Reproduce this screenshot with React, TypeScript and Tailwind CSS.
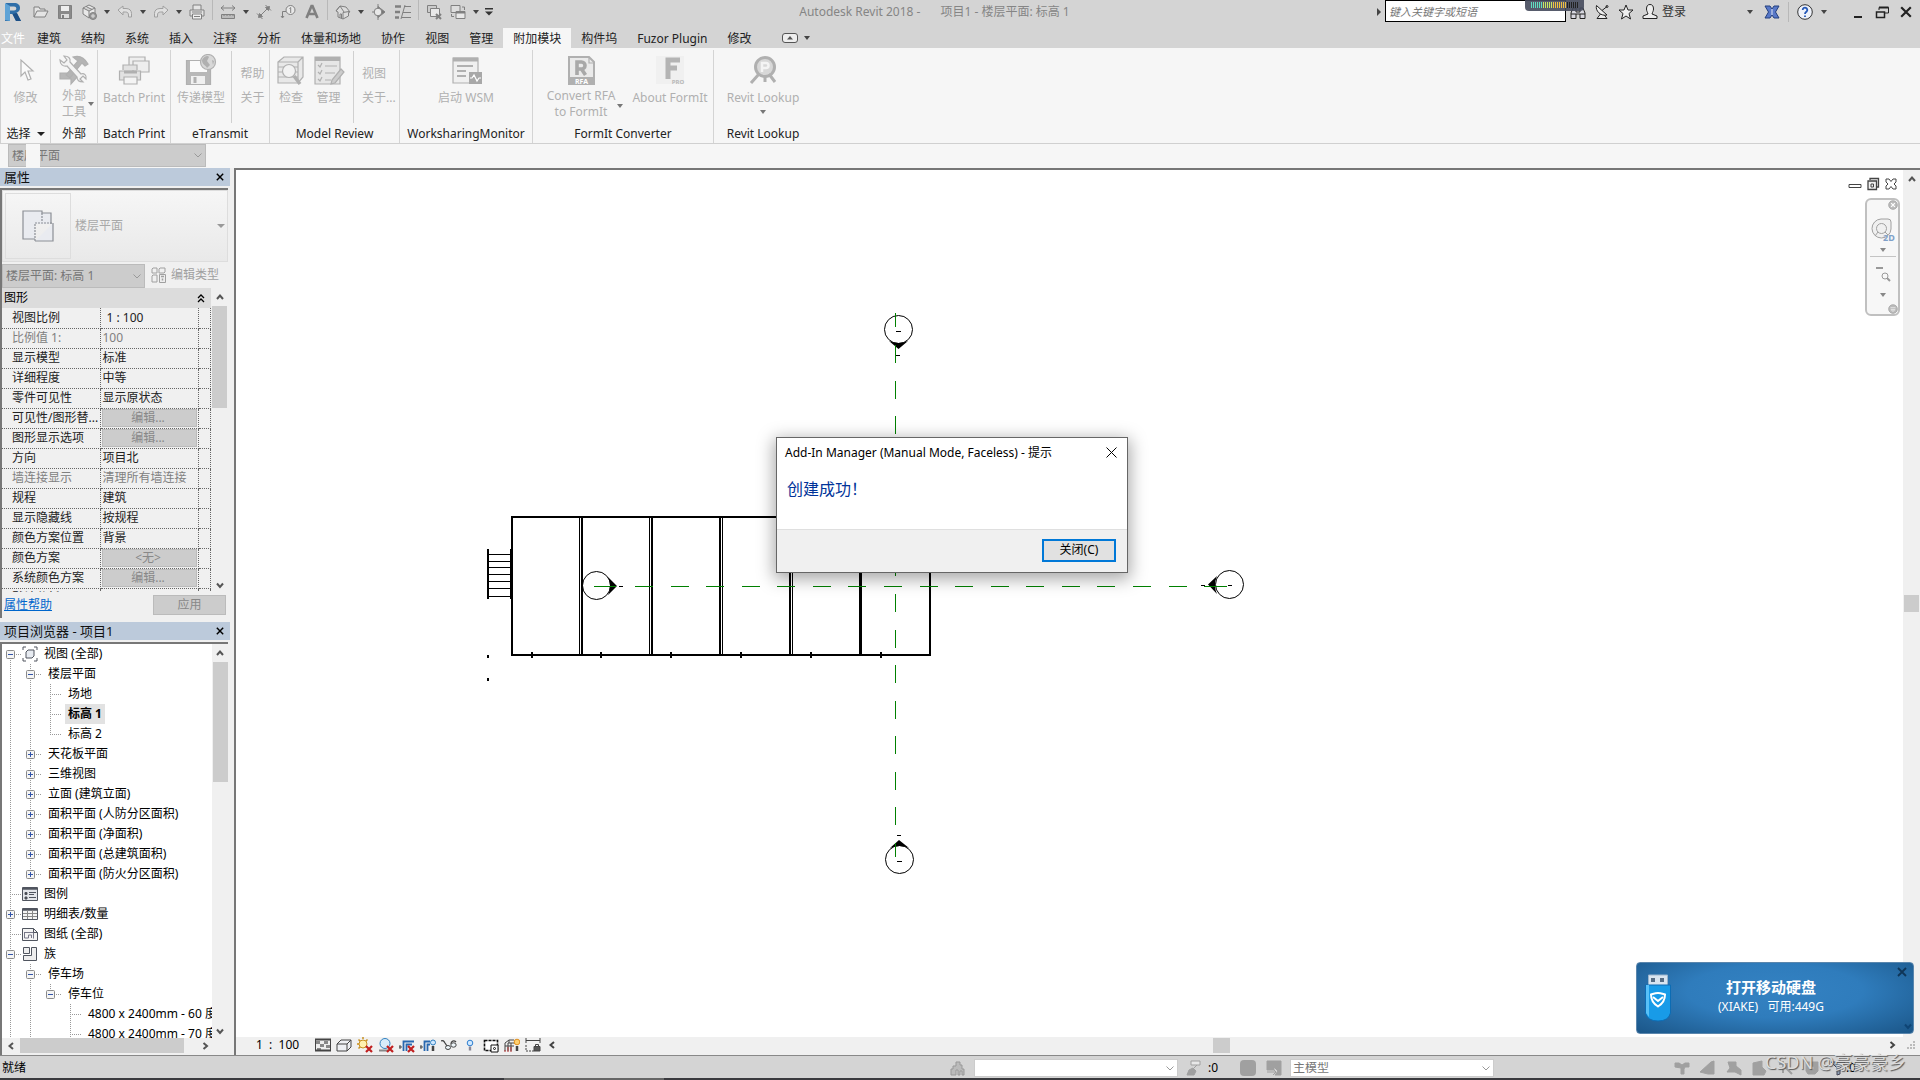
import type { ReactNode } from "react";

const ribbonTabs = [
  "建筑", "结构", "系统", "插入", "注释", "分析", "体量和场地", "协作", "视图", "管理",
  "附加模块", "构件坞", "Fuzor Plugin", "修改",
];

type PropertyRow = { label: string; value: string; kind?: "muted" | "button" | "input" };

const propertyRows: PropertyRow[] = [
  { label: "视图比例", value: "1 : 100", kind: "input" },
  { label: "比例值 1:", value: "100", kind: "muted" },
  { label: "显示模型", value: "标准" },
  { label: "详细程度", value: "中等" },
  { label: "零件可见性", value: "显示原状态" },
  { label: "可见性/图形替...", value: "编辑...", kind: "button" },
  { label: "图形显示选项", value: "编辑...", kind: "button" },
  { label: "方向", value: "项目北" },
  { label: "墙连接显示", value: "清理所有墙连接", kind: "muted" },
  { label: "规程", value: "建筑" },
  { label: "显示隐藏线", value: "按规程" },
  { label: "颜色方案位置", value: "背景" },
  { label: "颜色方案", value: "<无>", kind: "button" },
  { label: "系统颜色方案", value: "编辑...", kind: "button" },
  { label: "默认分析显示...", value: "无" },
];

// Guides, one letter per column: b blank, l line, t tee, e end,
// p plus, q last plus, m minus, r root minus, n last minus
type TreeRow = { guides: string; label: string; icon?: "views" | "legend" | "schedule" | "sheet" | "family"; selected?: boolean };

const treeRows: TreeRow[] = [
  { guides: "r", label: "视图 (全部)", icon: "views" },
  { guides: "lm", label: "楼层平面" },
  { guides: "llt", label: "场地" },
  { guides: "llt", label: "标高 1", selected: true },
  { guides: "lle", label: "标高 2" },
  { guides: "lp", label: "天花板平面" },
  { guides: "lp", label: "三维视图" },
  { guides: "lp", label: "立面 (建筑立面)" },
  { guides: "lp", label: "面积平面 (人防分区面积)" },
  { guides: "lp", label: "面积平面 (净面积)" },
  { guides: "lp", label: "面积平面 (总建筑面积)" },
  { guides: "lq", label: "面积平面 (防火分区面积)" },
  { guides: "t", label: "图例", icon: "legend" },
  { guides: "p", label: "明细表/数量", icon: "schedule" },
  { guides: "t", label: "图纸 (全部)", icon: "sheet" },
  { guides: "m", label: "族", icon: "family" },
  { guides: "lm", label: "停车场" },
  { guides: "lln", label: "停车位" },
  { guides: "llbt", label: "4800 x 2400mm - 60 度" },
  { guides: "llbt", label: "4800 x 2400mm - 70 度" },
];

function Ico({ children, className = "size-4" }: { children: ReactNode; className?: string }) {
  return (
    <svg viewBox="0 0 16 16" className={`shrink-0 ${className}`} fill="none" stroke="currentColor" aria-hidden="true">
      {children}
    </svg>
  );
}

function Caret({ className = "text-[#444]" }: { className?: string }) {
  return (
    <svg viewBox="0 0 6 4" className={`h-1 w-1.5 shrink-0 ${className}`} aria-hidden="true">
      <path d="M0 0h6L3 4z" fill="currentColor" />
    </svg>
  );
}

function Chevron({ dir = "down", className = "" }: { dir?: "up" | "down" | "left" | "right"; className?: string }) {
  const paths = {
    up: "M2 7l3-3.500 3 3.500",
    down: "M2 3.500l3 3.500 3-3.500",
    left: "M7 2l-3.500 3 3.500 3",
    right: "M3.500 2l3.500 3-3.500 3",
  };
  return (
    <svg viewBox="0 0 10 10" className={`size-2.5 shrink-0 ${className}`} fill="none" stroke="currentColor" strokeWidth="2" aria-hidden="true">
      <path d={paths[dir]} />
    </svg>
  );
}

function CloseX({ className = "size-2.5" }: { className?: string }) {
  return (
    <svg viewBox="0 0 10 10" className={`shrink-0 ${className}`} stroke="currentColor" strokeWidth="1.800" aria-hidden="true">
      <path d="M1 1l8 8M9 1l-8 8" />
    </svg>
  );
}

function ToolButton({ label, children }: { label: string; children: ReactNode }) {
  return (
    <button aria-label={label} className="flex h-6 w-6 shrink-0 items-center justify-center text-[#808080]">
      {children}
    </button>
  );
}

function DropButton({ label }: { label: string }) {
  return (
    <button aria-label={label} className="flex h-6 w-3 shrink-0 items-center justify-center">
      <Caret />
    </button>
  );
}

function Separator() {
  return (
    <span className="flex w-[7px] shrink-0 justify-center">
      <span className="h-5 w-px bg-[#b8b8b8]" />
    </span>
  );
}

function TitleBar() {
  return (
    <header className="flex h-7 items-start bg-[#d4d4d4]">
      <button aria-label="应用程序菜单" className="flex h-6 w-[29px] shrink-0 items-center justify-center pr-1">
        <svg viewBox="0 0 18 20" className="h-5 w-[18px]" aria-hidden="true">
          <path d="M2 1h8c4 0 6 2 6 5 0 2.500-1.500 4-3.500 4.800L17 19h-5l-3.500-7H6v7H1z" fill="#2f6ea8" />
          <path d="M1 1l5 3v15l-5-1z" fill="#5fa3d6" />
          <path d="M6 4.500h4c1.500 0 2.300.7 2.300 2S11.500 8.500 10 8.500H6z" fill="#d4d4d4" />
          <path d="M8.500 12l3.500 7h5L13 11z" fill="#1c4f86" />
        </svg>
      </button>
      <ToolButton label="打开">
        <Ico><path d="M1 13V3h5l1 2h5v2M1 13l3-6h11l-3 6z" fill="#e4e4e4" /></Ico>
      </ToolButton>
      <ToolButton label="保存">
        <Ico><path d="M1.500 1.500h13v13h-13z" fill="#8a8a8a" /><path d="M4 2h8v5H4z" fill="#eee" stroke="none" /><path d="M4 10h8v4H4z" fill="#ddd" stroke="none" /><path d="M6 11v3" strokeWidth="2" /></Ico>
      </ToolButton>
      <ToolButton label="同步">
        <Ico><path d="M8 1l6 3v6l-6 4-6-4V4zM2 4l6 3 6-3M8 7v7M5 2.500l6 3" fill="#e8e8e8" /><circle cx="12" cy="12" r="3.500" fill="#999" /><path d="M10 12h4M12 10v4" stroke="#ddd" /></Ico>
      </ToolButton>
      <DropButton label="同步选项" />
      <ToolButton label="放弃">
        <Ico><path d="M1 6l5-4v2.500h3c3.500 0 5.500 2 5.500 5V13h-3v-2c0-2-1-3-3-3H6v3z" fill="#e0e0e0" stroke="#a0a0a0" /></Ico>
      </ToolButton>
      <DropButton label="放弃列表" />
      <ToolButton label="重做">
        <Ico><path d="M15 6l-5-4v2.500H7C3.500 4.500 1.500 6.500 1.500 9.500V13h3v-2c0-2 1-3 3-3H10v3z" fill="#e0e0e0" stroke="#a0a0a0" /></Ico>
      </ToolButton>
      <DropButton label="重做列表" />
      <ToolButton label="打印">
        <Ico><path d="M4 6V1h8v5M1 6h14v6H1z" fill="#e4e4e4" /><path d="M3.500 10h9v5h-9z" fill="#f0f0f0" /><path d="M5 12.500h6M3 8h10" /></Ico>
      </ToolButton>
      <Separator />
      <ToolButton label="测量">
        <Ico><path d="M1 4h14M1 4l3-2.500M1 4l3 2.500M15 4l-3-2.500M15 4l-3 2.500" /><path d="M1.500 10.500h13v4h-13z" fill="#bbb" /><path d="M4 10v2M7 10v2M10 10v2M13 10v2" /></Ico>
      </ToolButton>
      <DropButton label="测量选项" />
      <ToolButton label="对齐标注">
        <Ico><path d="M3 13L13 3M1 9.500l5.500 5.500M9.500 1l5.500 5.500" /><path d="M2.500 13.500l1-4 3 3zM13.500 2.500l-4 1 3 3z" fill="#808080" /></Ico>
      </ToolButton>
      <ToolButton label="按类别标记">
        <Ico><circle cx="10.500" cy="6" r="4.500" fill="#e8e8e8" /><path d="M9.500 4.500l1.200-1V9M6 7.500H2.500v6M1 12l1.500 2L4 12" /></Ico>
      </ToolButton>
      <ToolButton label="文字">
        <Ico><path d="M2.500 14L7.500 2h1L13.500 14M4.500 10h7" strokeWidth="2.600" /></Ico>
      </ToolButton>
      <Separator />
      <ToolButton label="默认三维视图">
        <Ico><path d="M1 7l4-5 6 1 4 5-1.500.500V12L8 15l-5-2V8z" fill="#dcdcdc" /><path d="M1 7l4-5 4 6M8 15V8.500l6-1M5 13.500V10h1.500v4" /></Ico>
      </ToolButton>
      <DropButton label="三维视图选项" />
      <ToolButton label="剖面">
        <Ico><path d="M7 2.500l7 5.500-7 5.500z" fill="#777" /><circle cx="7" cy="8" r="3.800" fill="#e8e8e8" /><path d="M7 0v4M7 12v4M1 8h2" /></Ico>
      </ToolButton>
      <ToolButton label="细线">
        <Ico><path d="M0 2.500h6M0 8h5M0 13.500h4" strokeWidth="2.600" /><path d="M9 2.500h7M8 8.500h8M7 13.500h9M10 1L6 15" /></Ico>
      </ToolButton>
      <Separator />
      <ToolButton label="关闭隐藏窗口">
        <Ico><path d="M1.500 1.500h9v7h-9z" fill="#ccc" /><path d="M4.500 4.500h9v8h-9z" fill="#e8e8e8" /><path d="M10 10l5 5M15 10l-5 5" strokeWidth="2" /></Ico>
      </ToolButton>
      <ToolButton label="切换窗口">
        <Ico><path d="M1 1.500h9v7H1z" fill="#ddd" /><path d="M6 7.500h9v7H6z" fill="#e8e8e8" /><path d="M6 8.500h9" strokeWidth="2" /><path d="M12 3h2.500v3M4 12.500H1.500V10" /></Ico>
      </ToolButton>
      <DropButton label="窗口列表" />
      <button aria-label="自定义快速访问工具栏" className="flex h-6 w-3.5 items-center justify-center">
        <svg viewBox="0 0 8 8" className="size-2" aria-hidden="true"><path d="M0 0h8v1.500H0zM0 3.500h8L4 7.500z" fill="#333" /></svg>
      </button>

      <h1 className="flex flex-1 justify-center gap-5 whitespace-nowrap text-xs leading-6 text-[#858585]">
        <span>Autodesk Revit 2018 -</span>
        <span>项目1 - 楼层平面: 标高 1</span>
      </h1>

      <div className="flex items-start pr-0.5 text-[#222]">
        <button aria-label="展开搜索" className="flex h-6 w-3 items-center justify-center">
          <svg viewBox="0 0 4 8" className="h-2 w-1" aria-hidden="true"><path d="M0 0l4 4-4 4z" fill="#444" /></svg>
        </button>
        <div className="relative">
          <input
            aria-label="搜索"
            placeholder="键入关键字或短语"
            className="block h-[22px] w-[181px] border border-black bg-white pl-[3px] text-[11px] italic placeholder:text-[#777]"
          />
          <div className="absolute -right-[18px] top-0 h-[11px] w-[59px] rounded-b bg-[#454a5c]/90 px-[6px] pt-[2px]">
            <svg viewBox="0 0 48 6" className="h-[6px] w-12" aria-hidden="true">
              <path d="M0 3h12" stroke="#5fe0c0" strokeWidth="6" strokeDasharray="1 1" />
              <path d="M12 3h10" stroke="#c8e860" strokeWidth="6" strokeDasharray="1 1" />
              <path d="M22 3h14" stroke="#f0c040" strokeWidth="6" strokeDasharray="1 1" />
              <path d="M36 3h12" stroke="#222" strokeWidth="6" strokeDasharray="1 1" />
            </svg>
          </div>
        </div>
        <ToolButton label="搜索">
          <Ico className="size-4 text-[#222]"><path d="M1 9l2-5h3v4h4V4h3l2 5v5.500h-5V10H6v4.500H1zM1 10h5M10 10h5" fill="#d8d8e0" /></Ico>
        </ToolButton>
        <ToolButton label="通讯中心">
          <Ico className="size-4 text-[#222]"><path d="M3 14.500h10L9.500 10h-3z" fill="#eee" /><path d="M2.500 1.500c-1.500 5 4 11 10.500 9.500z" fill="#eee" /><path d="M8 6.500l5-4" /><circle cx="13" cy="2.500" r="1" /></Ico>
        </ToolButton>
        <ToolButton label="收藏夹">
          <Ico className="size-4 text-[#222]"><path d="M8 1l2 5h5l-4 3.500 1.500 5.500L8 12l-4.500 3L5 9.500 1 6h5z" fill="#eee" /></Ico>
        </ToolButton>
        <ToolButton label="用户">
          <Ico className="size-4 text-[#222]"><path d="M4.500 5a3.500 4.500 0 017 0c0 2-1 3-1.500 5l5 2v2.500H1V12l5-2c-.500-2-1.500-3-1.500-5z" fill="#eee" /></Ico>
        </ToolButton>
        <button className="flex h-6 w-[94px] items-center justify-between pr-[3px] text-xs text-[#333]">
          登录
          <Caret />
        </button>
        <button aria-label="Exchange Apps" className="flex h-6 w-8 items-center justify-center">
          <Ico className="size-4 text-[#24407f]"><path d="M1 2h5l2 3 2-3h5l-3.500 6L15 14h-5l-2-3-2 3H1l3.500-6z" fill="#5878c8" /><path d="M8 5v6" stroke="#dde4f4" /></Ico>
        </button>
        <span className="mt-0.5 h-5 w-px bg-[#b8b8b8]" />
        <button aria-label="帮助" className="flex h-6 w-[31px] items-center justify-center">
          <Ico className="size-4 text-[#333]"><circle cx="8" cy="8" r="7.300" fill="#eef2fa" /><path d="M5.700 6a2.300 2.300 0 114 1.500C8.500 8.500 8 8.500 8 10M8 11.500v1.500" stroke="#2458b8" strokeWidth="1.800" /></Ico>
        </button>
        <button aria-label="帮助选项" className="flex h-6 w-2 items-center justify-center"><Caret /></button>
        <button aria-label="最小化" className="ml-[18px] flex h-6 w-6 items-center justify-center">
          <Ico><path d="M4 13h8" strokeWidth="2" /></Ico>
        </button>
        <button aria-label="还原" className="flex h-6 w-6 items-center justify-center">
          <Ico><path d="M5 6V3.500h9.500V9H11" /><path d="M5 3.500h9.500" strokeWidth="2" /><path d="M2.500 8h8v5.500h-8zM2.500 8h8" strokeWidth="1.500" /></Ico>
        </button>
        <button aria-label="关闭" className="flex h-6 w-6 items-center justify-center">
          <CloseX className="size-3" />
        </button>
      </div>
    </header>
  );
}

function TabBar() {
  return (
    <nav className="flex h-5 items-stretch bg-[#d4d4d4] text-xs leading-4 text-[#222]">
      <button className="w-[27px] whitespace-nowrap pr-px pt-0.5 text-center text-white">文件</button>
      {ribbonTabs.map((tab) => (
        <button key={tab} className={`whitespace-nowrap px-2.5 pt-0.5 ${tab === "附加模块" ? "bg-[#f6f6f6]" : ""}`}>
          {tab}
        </button>
      ))}
      <button aria-label="最小化功能区" className="ml-5 flex items-center gap-1.5">
        <svg viewBox="0 0 16 10" className="h-2.5 w-4" fill="none" stroke="#555" aria-hidden="true">
          <rect x=".5" y=".5" width="15" height="9" rx="2.500" fill="#eee" />
          <path d="M5 6.500h6L8 3z" fill="#555" stroke="none" />
        </svg>
        <Caret />
      </button>
    </nav>
  );
}

function Panel({ title, className, children }: { title: ReactNode; className: string; children: ReactNode }) {
  return (
    <section className={`mt-0.5 flex shrink-0 flex-col border-r border-[#d4d4d4] ${className}`}>
      <div className="flex min-h-0 flex-1 justify-center">{children}</div>
      <h2 className="flex h-[18px] shrink-0 items-center justify-center gap-1.5 whitespace-nowrap text-xs text-[#222]">{title}</h2>
    </section>
  );
}

function BigButton({ icon, children, className = "" }: { icon: ReactNode; children: ReactNode; className?: string }) {
  return (
    <button className={`flex flex-col items-center whitespace-nowrap pt-1 text-xs leading-4 text-[#b0b0b0] ${className}`}>
      <span className="mb-0.5 flex h-8 items-center">{icon}</span>
      {children}
    </button>
  );
}

function Big({ children }: { children: ReactNode }) {
  return (
    <svg viewBox="0 0 32 32" className="size-8" fill="none" stroke="#b0b0b0" strokeWidth="1.200" aria-hidden="true">
      {children}
    </svg>
  );
}

function Ribbon() {
  return (
    <div className="flex h-24 border-b border-l border-[#d0d0d0] bg-[#f6f6f6]">
      <Panel className="w-[50px]" title={<>选择 <svg viewBox="0 0 8 4" className="h-1 w-2" aria-hidden="true"><path d="M0 0h8L4 4z" fill="#222" /></svg></>}>
        <BigButton icon={<Big><path d="M11 6v16l4-4 3 8 3-1-3-8h5z" fill="#fafafa" /></Big>}>
          <span className="mt-0.5">修改</span>
        </BigButton>
      </Panel>
      <Panel className="w-[47px]" title="外部">
        <BigButton
          icon={
            <Big>
              <path d="M2 19h11v-4l7 7-7 8v-5H2z" fill="#b8b8b8" />
              <path d="M15 3c6-2 11 0 15 7l-3 2-3-3-12 15-4-3L20 7z" fill="#b4b4b4" />
              <path d="M2 6l4 3 3-3-3-4c4 0 7 2 6 6l11 12c3-1 6 1 5 5l-3-3-3 3 3 3c-4 0-6-2-6-5L9 12c-4 1-7-2-7-6z" fill="#f4f4f4" />
            </Big>
          }
        >
          <span className="relative">
            外部
            <br />
            工具
            <span className="absolute -right-2 top-3.5 flex"><Caret className="text-[#777]" /></span>
          </span>
        </BigButton>
      </Panel>
      <Panel className="w-[73px]" title="Batch Print">
        <BigButton
          icon={
            <Big>
              <path d="M11 3h16v10H11z" fill="#eee" /><path d="M15 7h16v11H15z" fill="#eee" />
              <path d="M5 16V11h14v5M1.500 17h21v9h-21z" fill="#e2e2e2" />
              <path d="M6 23h13v7H6z" fill="#f4f4f4" /><path d="M6 18h13" strokeWidth="3" />
            </Big>
          }
        >
          <span className="mt-0.5">Batch Print</span>
        </BigButton>
      </Panel>
      <Panel className="w-[99px]" title="eTransmit">
        <BigButton
          className="w-[60px]"
          icon={
            <Big>
              <path d="M1.500 6.500h24v24h-24z" fill="#b8b8b8" /><path d="M5 7h17v11H5z" fill="#fafafa" stroke="none" />
              <path d="M6 22h14v8H6z" fill="#f0f0f0" stroke="none" /><path d="M10 23v6" strokeWidth="3" />
              <circle cx="23" cy="8" r="7.500" fill="#d8d8d8" />
              <path d="M17 6c2-4 6-5 7-3l-2 4 3 4-3 3c-1-3-5-3-5-8zM27 6l2 1-1 4z" fill="#b0b0b0" stroke="none" />
            </Big>
          }
        >
          <span className="mt-0.5">传递模型</span>
        </BigButton>
        <span className="mt-px h-[72px] w-px bg-[#d0d0d0]" />
        <div className="flex flex-1 flex-col items-center gap-2 whitespace-nowrap pl-1 pt-4 text-xs leading-4 text-[#b0b0b0]">
          <button>帮助</button>
          <button>关于</button>
        </div>
      </Panel>
      <Panel className="w-[130px]" title="Model Review">
        <BigButton
          className="w-[38px] pl-1"
          icon={
            <Big>
              <path d="M3 8l6-5h19v20l-5 6H3zM3 8h20v21M23 8l5-5M3 13h20M3 18h20M3 23h20" fill="#e8e8e8" />
              <circle cx="14" cy="17" r="6.500" fill="#f2f2f2" /><path d="M19 22l6 8" strokeWidth="3.500" />
            </Big>
          }
        >
          <span className="mt-0.5">检查</span>
        </BigButton>
        <BigButton
          className="w-[45px] pr-1"
          icon={
            <Big>
              <path d="M2 3h25v27H2z" fill="#e6e6e6" /><path d="M2 5h25" strokeWidth="4" />
              <path d="M5 11l2 2 2-4M5 18l2 2 2-4M5 25l2 2 2-4M12 12h12M12 19h10M12 26h6" />
              <path d="M28 15l3 3-9 11-4 1 1-4z" fill="#ccc" />
            </Big>
          }
        >
          <span className="mt-0.5">管理</span>
        </BigButton>
        <span className="mt-px h-[72px] w-px bg-[#d0d0d0]" />
        <div className="flex flex-1 flex-col items-start gap-2 whitespace-nowrap pl-2 pt-4 text-xs leading-4 text-[#b0b0b0]">
          <button>视图</button>
          <button>关于...</button>
        </div>
      </Panel>
      <Panel className="w-[133px]" title="WorksharingMonitor">
        <BigButton
          icon={
            <Big>
              <path d="M3 4h25v25H3z" fill="#f0f0f0" /><path d="M3 5.500h25" strokeWidth="4" />
              <path d="M7 12h16M7 17h9M7 22h9" strokeWidth="2" />
              <path d="M19 18h13v12H19z" fill="#a8a8a8" stroke="none" /><path d="M20 24h2l2-3 3 6 2-3h2" stroke="#fff" />
            </Big>
          }
        >
          <span className="mt-0.5">启动 WSM</span>
        </BigButton>
      </Panel>
      <Panel className="w-[181px]" title="FormIt Converter">
        <BigButton
          className="w-[94px]"
          icon={
            <Big>
              <path d="M4 3h20l5 5v22H4z" fill="#eaeaea" strokeWidth="2" /><path d="M24 3v6h5" />
              <path d="M12 21V8h4.500a3.500 3.500 0 010 7H12M16.500 15l4 6" strokeWidth="3.600" stroke="#a8a8a8" />
              <path d="M3 23h27v8H3z" fill="#b0b0b0" stroke="none" />
              <text x="16.500" y="30" fontSize="7" fontWeight="700" textAnchor="middle" fill="#fff" stroke="none">RFA</text>
            </Big>
          }
        >
          <span className="relative block text-center">
            Convert RFA
            <br />
            to FormIt
            <span className="absolute -right-2 top-4 flex"><Caret className="text-[#777]" /></span>
          </span>
        </BigButton>
        <BigButton
          className="w-[84px]"
          icon={
            <Big>
              <path d="M2 2h28v28H2z" fill="#f0f0f0" stroke="none" />
              <path d="M14 25V6h12M14 14h9" strokeWidth="5" stroke="#b4b4b4" />
              <text x="24" y="30" fontSize="6" fontWeight="700" textAnchor="middle" fill="#b8b8b8" stroke="none">PRO</text>
            </Big>
          }
        >
          <span className="mt-0.5">About FormIt</span>
        </BigButton>
      </Panel>
      <Panel className="w-[98px] border-r-0" title="Revit Lookup">
        <BigButton
          icon={
            <Big>
              <circle cx="18" cy="13" r="9.500" fill="#d8d8d8" strokeWidth="3" />
              <path d="M15 18V9h4a2.500 2.500 0 010 5h-4" strokeWidth="2.500" stroke="#f4f4f4" />
              <path d="M12 20l-8 9M18 22v6M22 20l6 8" strokeWidth="3" />
            </Big>
          }
        >
          <span className="mt-0.5">Revit Lookup</span>
          <span className="mt-1"><Caret className="text-[#777]" /></span>
        </BigButton>
      </Panel>
    </div>
  );
}

function SelectBox({ label, value, className, selectClass }: { label: string; value: string; className: string; selectClass: string }) {
  return (
    <div className={`relative ${className}`}>
      <select aria-label={label} className={`block h-full w-full appearance-none border text-xs leading-none ${selectClass}`}>
        <option>{value}</option>
      </select>
      <span className="pointer-events-none absolute inset-y-0 right-1 flex items-center">
        <svg viewBox="0 0 8 5" className="h-[5px] w-2" fill="none" stroke="#999" aria-hidden="true"><path d="M.5.5L4 4 7.500.5" /></svg>
      </span>
    </div>
  );
}

function PaletteTitle({ children }: { children: ReactNode }) {
  return (
    <div className="flex h-[18px] shrink-0 items-center justify-between bg-[#bccadb] pl-1 pr-1.5 text-[13px] leading-[18px] text-[#111]">
      <h2 className="whitespace-nowrap">{children}</h2>
      <button aria-label="关闭" className="text-black"><CloseX className="size-2" /></button>
    </div>
  );
}

function Properties() {
  return (
    <section className="flex h-[454px] shrink-0 flex-col">
      <PaletteTitle>属性</PaletteTitle>
      <div className="mt-0.5 flex min-h-0 flex-1 flex-col border-l-2 border-t-2 border-[#777] bg-[#f0f0f0] mb-1 mr-0.5">
        <button className="flex h-[72px] shrink-0 items-center border border-[#ddd] bg-linear-to-b from-[#f6f6f6] to-[#e9e9e9] pl-0.5 pr-0.5 text-xs text-[#a8a8a8]">
          <span className="flex size-[66px] items-center justify-center border border-[#ddd]">
            <svg viewBox="0 0 32 32" className="size-8" fill="#e9ebf0" stroke="#8c8f96" strokeWidth="1.200" aria-hidden="true">
              <path d="M1 1h19v2h9v11h-16v15H1z" stroke="none" />
              <path d="M13 29H1V1h19v2h9v11" fill="none" />
              <path d="M20 3v9" strokeDasharray="2 1" fill="none" />
              <path d="M31 13v18H13" />
              <path d="M13 31V13h18" strokeDasharray="2 1" fill="none" />
            </svg>
          </span>
          <span className="pl-1">楼层平面</span>
          <svg viewBox="0 0 8 4" className="ml-auto h-1 w-2" aria-hidden="true"><path d="M0 0h8L4 4z" fill="#999" /></svg>
        </button>
        <div className="mt-0.5 flex h-6 shrink-0 items-center">
          <SelectBox label="实例" value="楼层平面: 标高 1" className="h-6 w-[143px]" selectClass="border-[#bbb] bg-[#ccc] pl-[3px] text-[#777]" />
          <button className="flex items-center gap-1 whitespace-nowrap pb-0.5 pl-1.5 text-xs text-[#a0a0a0]">
            <Ico className="size-4"><path d="M1 2l1-1h4v5H1zM8 2l1-1h5v4l-1 1H8zM1 9l1-1h4v7H1z" /><path d="M8.500 7.500h6v8h-6z" fill="#eee" /><path d="M10 9.500h3M11.500 11.500v2" strokeWidth="1.500" /></Ico>
            编辑类型
          </button>
        </div>
        <div className="flex min-h-0 flex-1">
          <div className="flex-1 overflow-hidden">
            <button className="flex h-5 w-full items-center justify-between bg-[#dcdcdc] pl-0.5 pr-1.5 text-xs text-black">
              图形
              <svg viewBox="0 0 8 9" className="h-[9px] w-2" fill="none" stroke="#000" strokeWidth="1.300" aria-hidden="true"><path d="M1 4l3-3 3 3M1 8l3-3 3 3" /></svg>
            </button>
            <table className="w-full table-fixed border-collapse text-xs leading-4 text-[#222]">
              <colgroup>
                <col className="w-[98px]" />
                <col className="w-[98px]" />
                <col />
              </colgroup>
              <tbody>
                {propertyRows.map((row) => (
                  <tr key={row.label} className={`h-5 ${row.kind === "muted" ? "text-[#808080]" : ""}`}>
                    <th scope="row" className="overflow-hidden whitespace-nowrap border-b border-r border-dotted border-[#666] p-0 pl-2.5 text-left font-normal">
                      {row.label}
                    </th>
                    <td className="whitespace-nowrap border-b border-r border-dotted border-[#666] p-0">
                      {row.kind === "button" ? (
                        <button className="ml-px block h-[18px] w-[95px] border border-[#bbb] bg-[#ccc] pr-0.5 text-center leading-4 text-[#888]">{row.value}</button>
                      ) : row.kind === "input" ? (
                        <input aria-label={row.label} defaultValue={row.value} className="block w-full bg-transparent pl-1.5" />
                      ) : (
                        <span className="pl-0.5">{row.value}</span>
                      )}
                    </td>
                    <td className="border-b border-r border-dotted border-[#666] p-0" />
                  </tr>
                ))}
              </tbody>
            </table>
          </div>
          <div className="flex w-[17px] flex-col items-center justify-between pt-1 text-[#555]">
            <Chevron dir="up" />
            <div className="mb-auto mt-1 h-[102px] w-[15px] bg-[#ccc]" />
            <Chevron className="mb-0.5" />
          </div>
        </div>
        <div className="flex h-[26px] shrink-0 items-center justify-between pl-0.5 pr-0.5 text-xs">
          <a href="#help" className="text-[#0066cc] underline">属性帮助</a>
          <button className="h-5 w-[73px] border border-[#bbb] bg-[#ccc] leading-4 text-[#888]">应用</button>
        </div>
      </div>
    </section>
  );
}

function Guide({ kind }: { kind: string }) {
  const above = "ltempqn".includes(kind);
  const below = "ltmpr".includes(kind);
  const box = "pqmrn".includes(kind);
  return (
    <svg viewBox="0 0 20 20" className="size-5 shrink-0" fill="none" stroke="#999" aria-hidden="true">
      {above && <path d="M8.500 0v10" strokeDasharray="1 1" />}
      {below && <path d="M8.500 10v10" strokeDasharray="1 1" />}
      {kind !== "l" && kind !== "b" && <path d="M8 10.500h12" strokeDasharray="1 1" />}
      {box && <rect x="4.500" y="6.500" width="8" height="8" rx="1" fill="#f4f4f4" stroke="#8a8a8a" />}
      {box && <path d="M6 10.500h5" stroke="#3355aa" />}
      {(kind === "p" || kind === "q") && <path d="M8.500 8v5" stroke="#3355aa" />}
    </svg>
  );
}

function TreeIcon({ name }: { name: NonNullable<TreeRow["icon"]> }) {
  const art = {
    views: <><path d="M1 4V1h3M12 1h3v3M15 12v3h-3M4 15H1v-3" /><path d="M4 6l2-2h6v6l-2 2H4z" fill="#e8ecf2" /></>,
    legend: <><path d="M.5 1.500h15v13H.5z" fill="#e4e6ea" /><path d="M1 2.500h14" strokeWidth="2.500" /><path d="M3 6.500h2v2H3zM3 11h2v2H3z" fill="#444" /><path d="M7 6.500h7M7 8.500h5M7 11.500h7" /></>,
    schedule: <><path d="M.5 2.500h15v11H.5z" fill="#f4f4f4" /><path d="M1 3.500h14" strokeWidth="2.500" /><path d="M1 7.500h14M1 10.500h14M5.500 4v9M10.500 4v9" stroke="#888" /></>,
    sheet: <><path d="M.5 2.500h11l4 4v8H.5z" fill="#f4f4f4" /><path d="M2.500 6.500h9M2.500 6v6h4v-3h3v3M11.500 6.500v6" stroke="#778" /><path d="M11.500 2.500v4h4" /></>,
    family: <><path d="M1.500 1.500h6v6h-6z" fill="#eee" /><path d="M1.500 9.500h8v-8h5v13h-13z" fill="#eee" /></>,
  };
  return (
    <span className="flex w-5 shrink-0">
      <Ico className="size-4 text-[#50555f]">{art[name]}</Ico>
    </span>
  );
}

function ProjectBrowser() {
  return (
    <section className="flex min-h-0 flex-1 flex-col">
      <PaletteTitle>项目浏览器 - 项目1</PaletteTitle>
      <div className="mr-0.5 mt-0.5 flex min-h-0 flex-1 flex-col border-l-2 border-t-2 border-[#777] bg-white">
        <div className="flex min-h-0 flex-1">
          <ul className="flex-1 overflow-hidden text-xs leading-5 text-black">
            {treeRows.map((row, i) => (
              <li key={i} className="flex h-5 items-center whitespace-nowrap">
                {row.guides.split("").map((kind, k) => (
                  <Guide key={k} kind={kind} />
                ))}
                {row.icon && <TreeIcon name={row.icon} />}
                <button
                  className={`px-[3px] ${row.icon ? "-ml-px" : "ml-[3px]"} ${row.selected ? "bg-[#e2e2e2] font-bold" : ""}`}
                >
                  {row.label}
                </button>
              </li>
            ))}
          </ul>
          <div className="flex w-4 flex-col items-center bg-[#f0f0f0] pt-1 text-[#555]">
            <Chevron dir="up" />
            <div className="mb-auto mt-1 h-[120px] w-[15px] bg-[#ccc]" />
            <Chevron className="mb-0.5" />
          </div>
        </div>
        <div className="flex h-[17px] shrink-0 items-center bg-[#f0f0f0] pb-0.5 pl-1 text-[#555]">
          <Chevron dir="left" />
          <div className="mx-1 h-[15px] w-[164px] bg-[#ccc]" />
          <Chevron dir="right" className="ml-3" />
        </div>
      </div>
    </section>
  );
}

function Drawing() {
  const walls = [
    [579.5, 582],
    [649.5, 652],
    [722.5, 720],
    [792.5, 790],
  ];
  return (
    <svg className="block h-full w-full" aria-label="楼层平面图" shapeRendering="crispEdges">
      <g transform="translate(-236 -170)" fill="none" stroke="#000">
        <path d="M512 517h418v138H512z" strokeWidth="2" />
        {walls.map(([thin, thick]) => (
          <g key={thin}>
            <path d={`M${thin} 517v138`} />
            <path d={`M${thick} 517v138`} strokeWidth="2" />
          </g>
        ))}
        <path d="M860.500 517v138" strokeWidth="3" />
        <path d="M532 652v6M601 652v6M671 652v6M741 652v6M811 652v6M881 652v6" strokeWidth="2" />
        <path d="M488 549v50M511 549v50" strokeWidth="2" />
        <path d="M488 554.500h23M488 561.500h23M488 567.500h23M488 574.500h23M488 581.500h23M488 588.500h23M488 596.500h23" />
        <path d="M487 655h2v3h-2zM487 678h2v3h-2z" fill="#000" stroke="none" />

        {/* elevation markers */}
        <g shapeRendering="geometricPrecision">
          <circle cx="898.500" cy="329.500" r="14" />
          <circle cx="899.500" cy="859.500" r="14" />
          <circle cx="596.500" cy="585.500" r="14" />
          <circle cx="1229.500" cy="584.500" r="14" />
          <path d="M889 341q9.500 4 19 0l-9.500 8z" fill="#000" stroke="none" />
          <path d="M890 848q9.500-4 19 0l-10-8z" fill="#000" stroke="none" />
          <path d="M608 577q4 9 0 18l9-9z" fill="#000" stroke="none" />
          <path d="M1217 576q-4 9 0 18l-9-9.500z" fill="#000" stroke="none" />
        </g>
        <path d="M896 331.500h5M896 355.500h4M897 861.500h5M897 835.500h4M619 586.500h4M1228 585.500h4M1201 585.500h4" />

        {/* reference planes */}
        <g stroke="#008000">
          <path d="M594 586.500h22M1204 586.500h23" />
          <path d="M635 586.500h565" strokeDasharray="18 17.570" />
          <path d="M895.500 313v14" />
          <path d="M895.500 345v512" strokeDasharray="18 17.570" />
        </g>
      </g>
    </svg>
  );
}

function NavigationBar() {
  return (
    <div className="absolute right-[3px] top-7 flex h-[118px] w-[35px] flex-col items-center rounded-md border-2 border-[#c0c0c0] bg-[#f7f7f7] text-[#999]">
      <button aria-label="关闭导航栏" className="self-end">
        <Ico className="size-2.5"><circle cx="8" cy="8" r="7" fill="#bbb" /><path d="M5 5l6 6M11 5l-6 6" stroke="#fff" strokeWidth="2" /></Ico>
      </button>
      <button aria-label="二维控制盘" className="mt-2">
        <svg viewBox="0 0 24 24" className="size-6" fill="#f0f0f0" stroke="#a0a0a0" aria-hidden="true">
          <path d="M10 1h7q3 0 3 3v7a9.500 9.500 0 11-10-10z" />
          <circle cx="10.500" cy="10.500" r="5" />
          <path d="M4 18l3-4M14 14l3 3" />
          <text x="12" y="23" fontSize="9" fontWeight="700" fill="#7fa0c8" stroke="none">2D</text>
        </svg>
      </button>
      <span className="mt-1.5 flex"><Caret className="text-[#888]" /></span>
      <span className="mt-1 h-px w-[26px] shrink-0 bg-[#c4c4c4]" />
      <button aria-label="缩放" className="mt-2.5">
        <Ico className="size-4"><path d="M1 1h7" strokeWidth="2" /><circle cx="10" cy="9" r="3" /><path d="M12 11l3 3" strokeWidth="2" /></Ico>
      </button>
      <span className="mt-2.5 flex"><Caret className="text-[#888]" /></span>
      <button aria-label="导航栏选项" className="mt-auto self-end">
        <Ico className="size-2.5"><circle cx="8" cy="8" r="7" fill="#bbb" /><path d="M4 6h8M5 9h6l-3 3z" stroke="#fff" /></Ico>
      </button>
    </div>
  );
}

function ViewControls() {
  const redX = <path d="M9 9l6 6M15 9l-6 6" stroke="#c02020" strokeWidth="2.200" />;
  const controls: [string, ReactNode][] = [
    ["详细程度", <><path d="M.5 2.500h15v11H.5z" fill="#eee" /><path d="M1 4h4v3H1zM9 4h4v3H9zM5 7h4v3H5zM11 8h4v3h-4zM2 11h4v2H2z" fill="#888" stroke="none" /><path d="M0 2.500h16M0 13.500h16" strokeWidth="2" /></>],
    ["视觉样式", <path d="M1 7l4-4h10v7l-4 4H1zM1 7h10v7M11 7l4-4" fill="#eef0f4" />],
    ["日光路径", <><circle cx="6" cy="7" r="4" fill="#fff0b0" stroke="#c89020" /><path d="M6 0v2M0 7h2M1.500 2.500L3 4M10.500 2.500L9 4M1.500 11.500L3 10" stroke="#c89020" strokeWidth="1.500" />{redX}</>],
    ["阴影", <><circle cx="7" cy="6.500" r="5" fill="#d8ecfa" stroke="#3080c0" /><path d="M1 13.500h9" strokeWidth="2" stroke="#888" />{redX}</>],
    ["裁剪视图", <><path d="M0 10h3M1 8v4" /><path d="M4.500 14V4.500H15M7.500 14V7.500H13" stroke="#2868b0" strokeWidth="1.800" />{redX}</>],
    ["显示裁剪区域", <><path d="M0 10h3M1 8v4" /><path d="M4.500 14V4.500H10M7.500 14V7.500H10" stroke="#2868b0" strokeWidth="1.800" /><circle cx="13" cy="5.500" r="2.500" fill="#cfe8ff" stroke="#3080c0" /><path d="M13 9v5" strokeWidth="2.500" /></>],
    ["临时隐藏", <><path d="M0 4c2-1 3 0 4 2l2 3M10 7c0-3 3-4 5-2" strokeWidth="1.300" /><ellipse cx="7" cy="10.500" rx="2.500" ry="2" fill="#eef6fa" /><ellipse cx="12.500" cy="8" rx="2.700" ry="2.200" fill="#eef6fa" /></>],
    ["显示隐藏图元", <><circle cx="8" cy="6" r="2.800" fill="#cfe8ff" stroke="#3080d0" /><path d="M8 9.500v4" stroke="#889" strokeWidth="2.400" /></>],
    ["临时视图属性", <><path d="M1.500 3.500h13v10h-13z" stroke="#111" fill="#fff" strokeWidth="1.600" strokeDasharray="3 1" /><path d="M8 8h7v7H8z" fill="#fff" stroke="#111" /><circle cx="11.500" cy="11.500" r="1" stroke="#111" /></>],
    ["分析模型", <><path d="M1 14V6l4-3h5M4 14V6h7M7 14V6M1 9h9M5 3v3" /><path d="M1 13v2M4 10v5M7 10v5" stroke="#b03030" /><circle cx="13" cy="5" r="2.800" fill="#ffd070" stroke="#e09020" /><path d="M13 9v5" strokeWidth="2.500" /></>],
    ["约束", <><path d="M1 1v5M15 1v5M1 3.500h14" /><path d="M1 8v6h8" strokeDasharray="2 1" /><path d="M9 9.500h6V14H9z" fill="#555" /><path d="M10.500 9V7.500h3V9" /></>],
  ];
  return (
    <div className="flex h-[18px] items-center bg-[#f0f0f0] pb-0.5 text-[#444]">
      <button className="w-[76px] whitespace-pre pl-5 text-left text-xs leading-4 text-black">1  :  100</button>
      {controls.map(([name, art]) => (
        <button key={name} aria-label={name} className="flex w-[21px] shrink-0 items-center justify-center">
          <Ico className="size-4">{art}</Ico>
        </button>
      ))}
      <span className="pl-1"><Chevron dir="left" /></span>
      <div className="flex flex-1 items-center">
        <div className="flex flex-1 pl-2"><span className="ml-[49%] h-[15px] w-[17px] bg-[#ccc]" /></div>
        <Chevron dir="right" className="mr-2.5" />
      </div>
      <svg viewBox="0 0 9 9" className="mr-1 size-[9px]" fill="#bbb" aria-hidden="true">
        <path d="M6 0h2v2H6zM6 3h2v2H6zM3 3h2v2H3zM6 6h2v2H6zM3 6h2v2H3zM0 6h2v2H0z" />
      </svg>
    </div>
  );
}

function Canvas() {
  return (
    <main className="flex min-w-0 flex-1 flex-col border-l-2 border-t-2 border-[#777] bg-white">
      <div className="flex min-h-0 flex-1">
        <div className="relative min-w-0 flex-1">
          <div className="absolute inset-0"><Drawing /></div>
          <div className="absolute right-1 top-1.5 flex gap-0.5 text-[#444]">
            <button aria-label="最小化视图"><Ico><path d="M2 8.500h12v3H2z" /></Ico></button>
            <button aria-label="还原视图"><Ico><path d="M5 4V2.500h8.500V11H12M3 5h8.500v8.500H3z" fill="#f0f0f0" strokeWidth="1.300" /><path d="M6 8h2.500v3H6z" /></Ico></button>
            <button aria-label="关闭视图"><Ico><path d="M3 3h3l2 2.500L10 3h3v3l-2 2 2 2v3h-3l-2-2.500L6 13H3v-3l2-2-2-2z" /></Ico></button>
          </div>
          <NavigationBar />
        </div>
        <div className="flex w-[17px] flex-col items-center bg-[#f0f0f0] pb-3.5 pt-1 text-[#555]">
          <Chevron dir="up" />
          <div className="flex flex-1 flex-col justify-center"><span className="h-[17px] w-[15px] bg-[#ccc]" /></div>
        </div>
      </div>
      <ViewControls />
    </main>
  );
}

function StatusBar() {
  return (
    <footer className="flex h-[25px] shrink-0 flex-col border-t border-[#888] bg-[#d4d4d4]">
      <div className="flex h-[22px] items-center pt-0.5 text-xs leading-4 text-black">
        <span className="w-[950px] shrink-0 pl-0.5">就绪</span>
        <Ico className="size-4 text-[#999]"><path d="M1 15V9h2V6h3V2h4v3h2v4h2v6h-2v-4h-2v4H8v-5H6v5z" fill="#bbb" /></Ico>
        <SelectBox label="工作集" value="" className="ml-2 h-[18px] w-[204px]" selectClass="border-[#ccc] bg-white" />
        <Ico className="ml-2 size-4 text-[#a0a0a0]"><path d="M5 1h9v4H5zM11 5L7 9" fill="#e8e8e8" /><path d="M7 8l3 3-2 4H1l2-5z" fill="#a0a0a0" /></Ico>
        <span className="ml-1.5 w-[26px]">:0</span>
        <span className="ml-1.5 size-4 rounded-sm bg-[#a0a0a0]" />
        <Ico className="ml-2.5 size-4 text-[#a0a0a0]"><path d="M1 1h14v14H9l3-4-4-4v3H1z" fill="#a0a0a0" /><path d="M1 12h8M7 9l3 3-3 3" /></Ico>
        <SelectBox label="设计选项" value="主模型" className="ml-2 h-[18px] w-[204px]" selectClass="border-[#ccc] bg-white pl-0.5 text-[#777]" />
        <div className="ml-auto flex items-center gap-2.5 pr-16 text-[#a0a0a0]">
          <Ico><path d="M1 3h4l3 2 3-2h4v4h-4l-1 2v5H7V8L1 7z" fill="#a0a0a0" /></Ico>
          <Ico><path d="M0 12L11 2l3-1v13H8z" fill="#a0a0a0" /></Ico>
          <Ico><path d="M2 2h8v4l5 4v5l-6-3H1l3-4z" fill="#a0a0a0" /></Ico>
          <Ico><path d="M1 3l9-2v6l4 4-2 4H1z" fill="#a0a0a0" /></Ico>
          <Ico><path d="M1 4h8v5l5 5M5 1v12M1 8h9" strokeWidth="2" /></Ico>
          <Ico><path d="M2 2h12v9l-3 3H4l-2-3z" fill="#a0a0a0" /><circle cx="8" cy="8" r="2" fill="#ddd" /></Ico>
          <span className="flex items-center text-black">
            <Ico className="size-4 text-[#445]"><path d="M1 2h14l-5 6v6l-3 1V8z" fill="#8fa0b4" /></Ico>
            :0
          </span>
        </div>
      </div>
      <div className="flex h-0.5 bg-[#3a3a3e]">
        <span className="ml-[504px] w-40 bg-[#666]" />
      </div>
    </footer>
  );
}

function MessageDialog() {
  return (
    <div
      role="dialog"
      aria-labelledby="dialog-title"
      className="absolute left-[776px] top-[437px] flex h-[136px] w-[352px] flex-col border border-[#666] bg-white shadow-[0_4px_16px_2px_rgba(0,0,0,0.35)]"
    >
      <div className="flex h-[29px] items-center justify-between pl-2 pr-2.5 text-xs text-black">
        <h2 id="dialog-title" className="whitespace-nowrap">Add-In Manager (Manual Mode, Faceless) - 提示</h2>
        <button aria-label="关闭">
          <svg viewBox="0 0 11 11" className="size-[11px]" stroke="#000" aria-hidden="true"><path d="M.5.500l10 10M10.500.500l-10 10" /></svg>
        </button>
      </div>
      <p className="flex-1 pl-2.5 pt-2.5 text-base leading-6 text-[#003399]">创建成功！</p>
      <div className="flex h-[43px] items-center justify-end border-t border-[#dfdfdf] bg-[#f0f0f0] pb-0.5 pr-[11px]">
        <button className="h-[23px] w-[74px] border-2 border-[#0078d7] bg-[#e1e1e1] text-xs leading-none text-black">关闭(C)</button>
      </div>
    </div>
  );
}

function DriveToast() {
  return (
    <div className="absolute bottom-[46px] right-1.5 flex h-[72px] w-[278px] items-center rounded-sm border border-[#5a86ad] bg-[radial-gradient(ellipse_at_50%_40%,#3482c2_0%,#2f7cbc_45%,#1b5688_100%)] text-white">
      <svg viewBox="0 0 26 48" className="ml-2 h-12 w-[26px] shrink-0" aria-hidden="true">
        <path d="M3.500 1h19v11h-19z" fill="#d8e4f0" stroke="#9ab4cc" />
        <path d="M6 4h4v4H6zM15 4h4v4h-4z" fill="#556c84" />
        <path d="M.5 11h25v28q-2 8-12.500 8T.5 39z" fill="#189be8" stroke="#0c6cb4" />
        <path d="M1 11h3v32l-3-4z" fill="#58c0f8" />
        <path d="M13 19c3 0 5 1 7 1.500 0 6-2 9-7 12-5-3-7-6-7-12 2-.5 4-1.500 7-1.500z" fill="none" stroke="#fff" strokeWidth="2" />
        <path d="M8 23l5 4 5-4" fill="none" stroke="#fff" strokeWidth="2" />
      </svg>
      <div className="flex-1 pb-0.5 pr-[42px] text-center">
        <p className="text-[15px] font-bold leading-5">打开移动硬盘</p>
        <p className="whitespace-pre text-xs leading-5">(XIAKE)   可用:449G</p>
      </div>
      <button aria-label="关闭通知" className="absolute right-1.5 top-1 text-[#0f3557]"><CloseX className="size-2.5" /></button>
      <span className="absolute bottom-0.5 right-0 text-[#0f4575]"><Chevron /></span>
    </div>
  );
}

export default function App() {
  return (
    <div className="relative flex h-screen w-full select-none flex-col overflow-hidden bg-[#f0f0f0] font-['Noto_Sans','Noto_Sans_CJK_SC',sans-serif]">
      <TitleBar />
      <TabBar />
      <Ribbon />
      <div className="flex h-6 shrink-0 items-start bg-[#f6f6f6] pl-2">
        <div className="relative">
          <SelectBox label="视图类型" value="楼层平面" className="h-[23px] w-[198px]" selectClass="border-[#bbb] bg-[#ccc] pl-[3px] text-[#777]" />
          <span className="absolute left-[18px] top-0 h-[23px] w-3.5 bg-[#f6f6f6]" />
        </div>
      </div>
      <div className="flex min-h-0 flex-1">
        <aside className="mr-1 flex w-[230px] shrink-0 flex-col">
          <Properties />
          <ProjectBrowser />
        </aside>
        <Canvas />
      </div>
      <StatusBar />
      <DriveToast />
      <MessageDialog />
      <p className="pointer-events-none absolute bottom-1 right-3.5 whitespace-nowrap text-lg leading-7 text-[#dcdcdc] [text-shadow:1px_1px_1px_#555]">
        CSDN @豪豪豪乡
      </p>
    </div>
  );
}
